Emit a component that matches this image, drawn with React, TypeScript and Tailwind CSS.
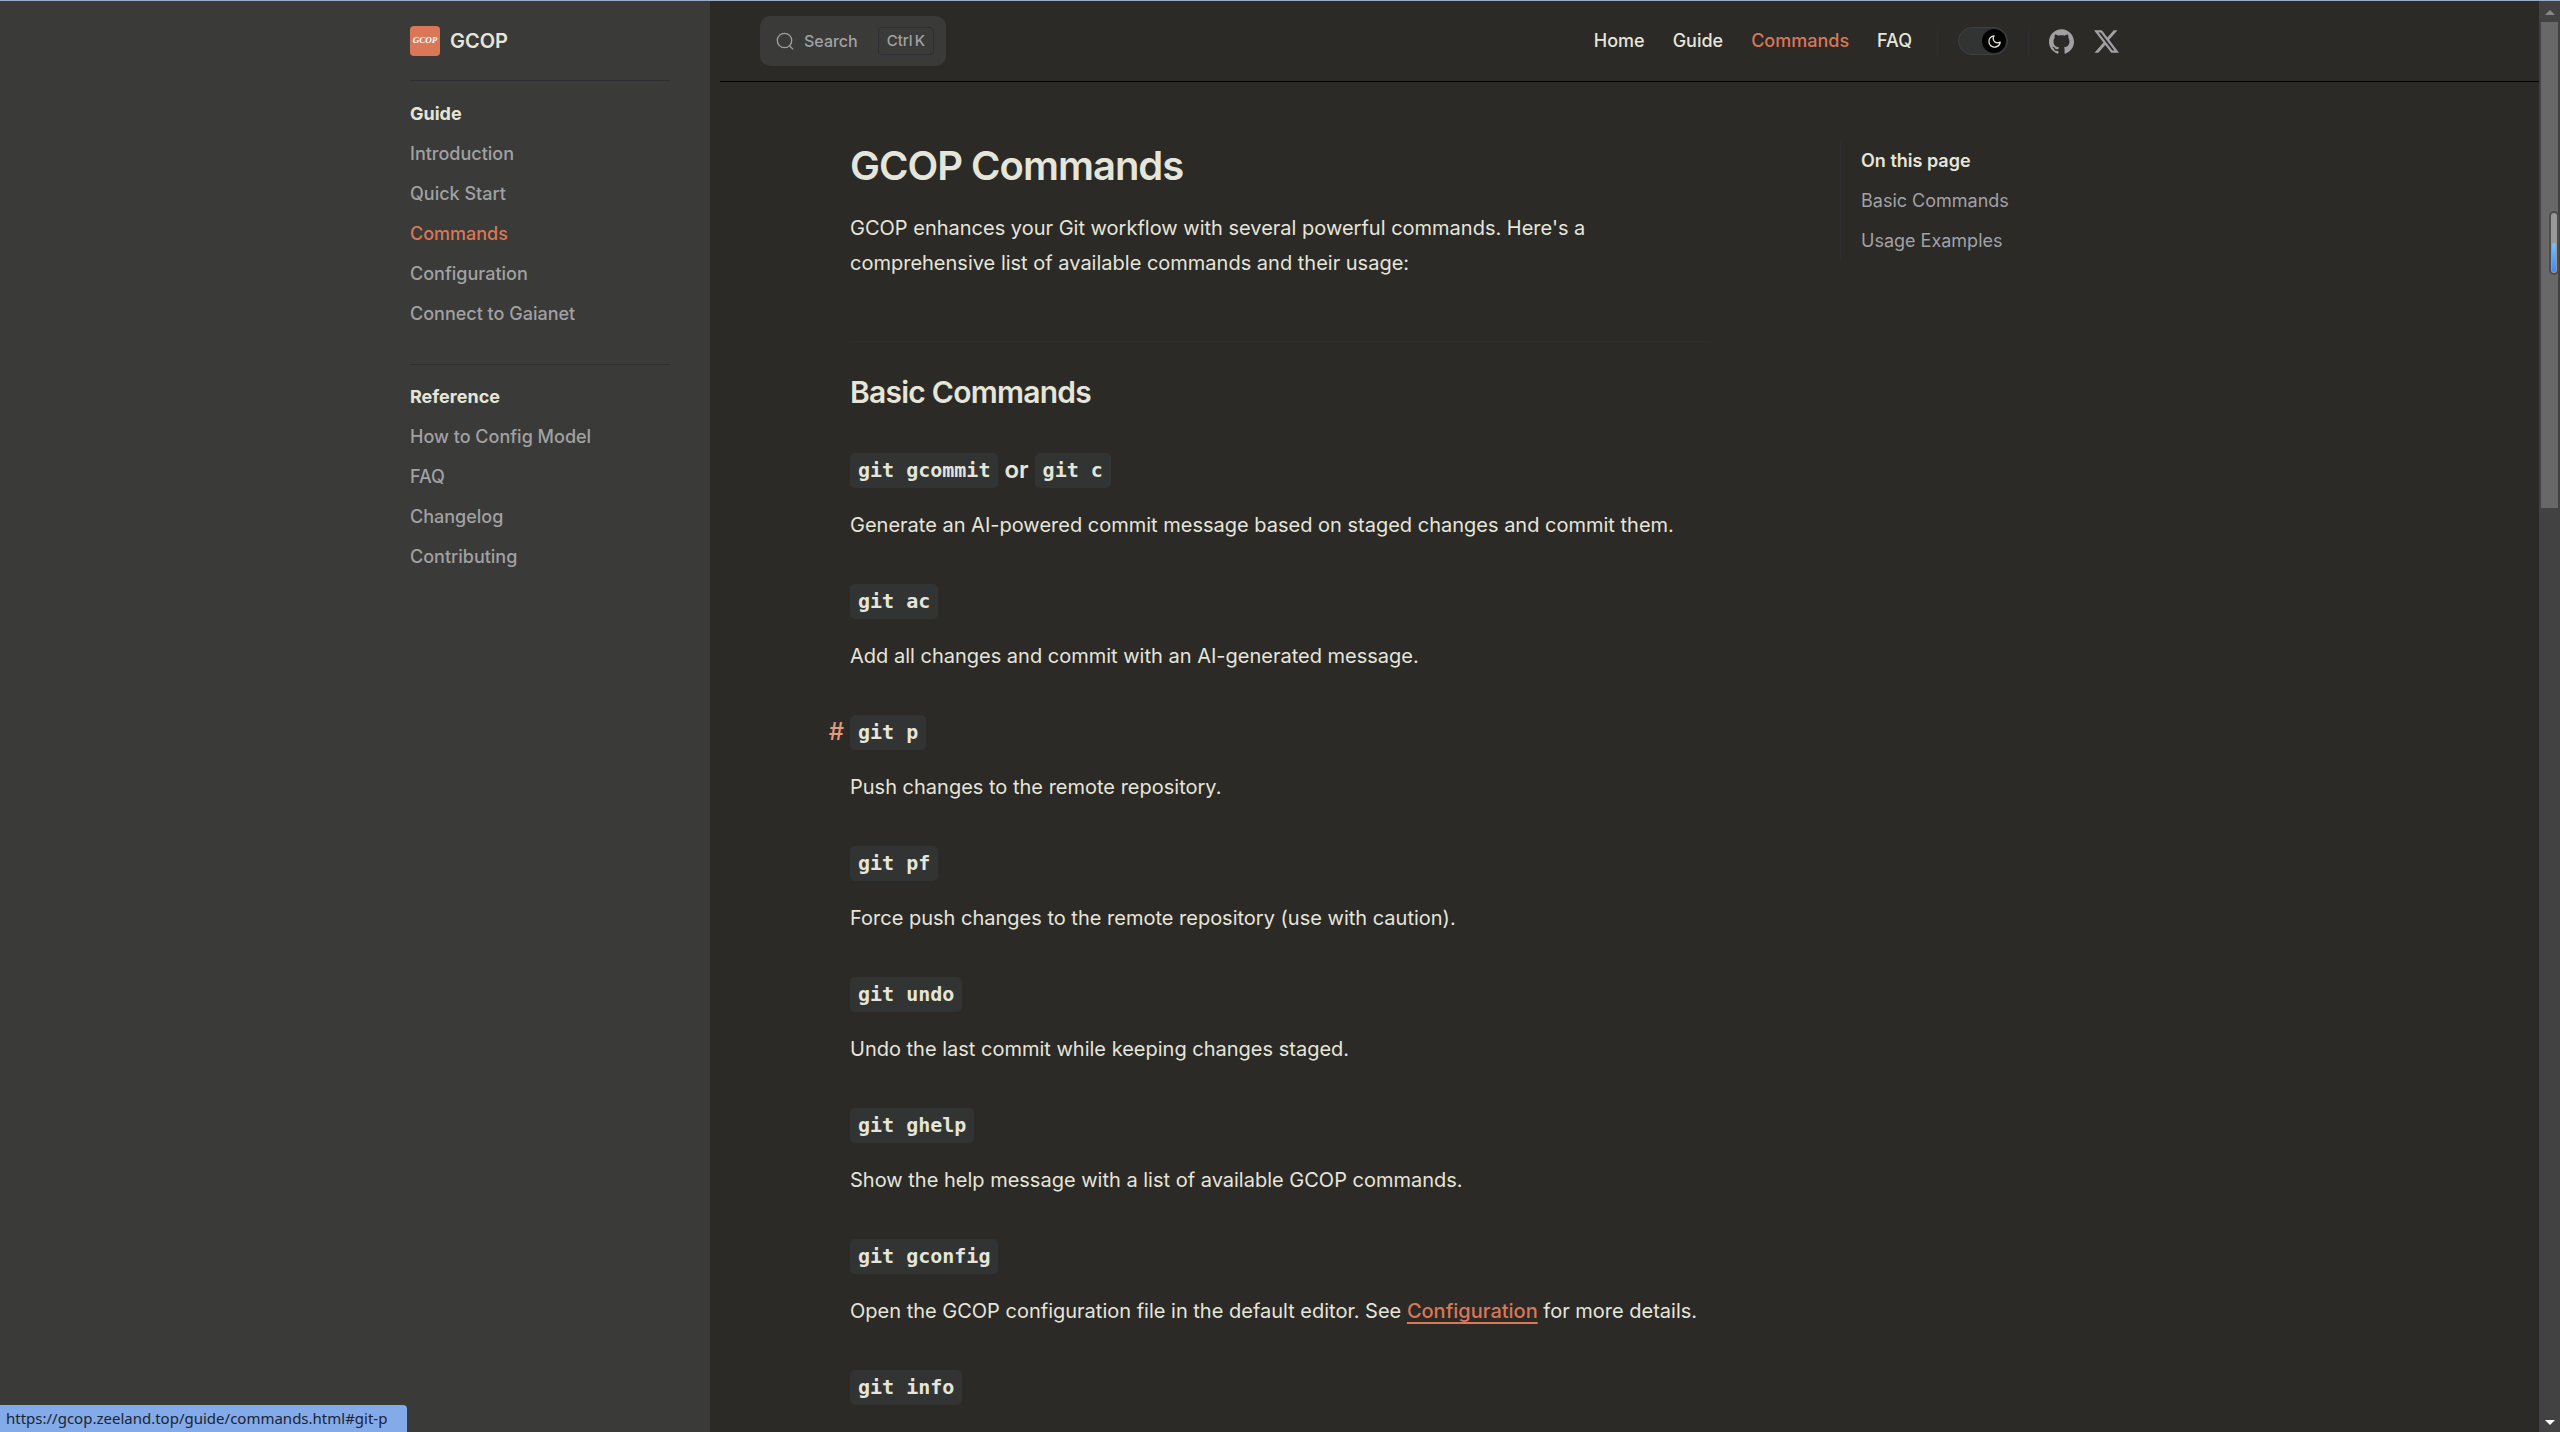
import { clsx } from "clsx";
import type { ReactNode } from "react";

interface LinkItem {
    text: string;
    active?: boolean;
}

interface SidebarGroup {
    title: string;
    items: LinkItem[];
}

interface Command {
    names: string[];
    description?: ReactNode;
    hovered?: boolean;
}

const navLinks: LinkItem[] = [
    { text: "Home" },
    { text: "Guide" },
    { text: "Commands", active: true },
    { text: "FAQ" },
];

const sidebarGroups: SidebarGroup[] = [
    {
        title: "Guide",
        items: [
            { text: "Introduction" },
            { text: "Quick Start" },
            { text: "Commands", active: true },
            { text: "Configuration" },
            { text: "Connect to Gaianet" },
        ],
    },
    {
        title: "Reference",
        items: [
            { text: "How to Config Model" },
            { text: "FAQ" },
            { text: "Changelog" },
            { text: "Contributing" },
        ],
    },
];

const commands: Command[] = [
    {
        names: ["git gcommit", "git c"],
        description:
            "Generate an AI-powered commit message based on staged changes and commit them.",
    },
    {
        names: ["git ac"],
        description: "Add all changes and commit with an AI-generated message.",
    },
    {
        names: ["git p"],
        description: "Push changes to the remote repository.",
        hovered: true,
    },
    {
        names: ["git pf"],
        description:
            "Force push changes to the remote repository (use with caution).",
    },
    {
        names: ["git undo"],
        description: "Undo the last commit while keeping changes staged.",
    },
    {
        names: ["git ghelp"],
        description:
            "Show the help message with a list of available GCOP commands.",
    },
    {
        names: ["git gconfig"],
        description: (
            <>
                Open the GCOP configuration file in the default editor. See{" "}
                <a
                    href="#configuration"
                    className="font-medium text-[#d97757] underline decoration-2 underline-offset-4"
                >
                    Configuration
                </a>{" "}
                for more details.
            </>
        ),
    },
    {
        names: ["git info"],
    },
];

export default function App() {
    return (
        <div className="relative flex h-screen overflow-hidden border-t border-[#9aabc6] bg-[#2b2a27] font-['Inter','Liberation_Sans',sans-serif] text-[#e5e5da]">
            <Sidebar />
            <div className="flex min-w-0 flex-1 flex-col">
                <NavBar />
                <div className="flex min-h-0 flex-1 gap-[130px] overflow-hidden pt-[59px] pl-[140px]">
                    <Doc />
                    <Outline />
                </div>
            </div>
            <PageScrollbar />
            <div className="absolute bottom-0 left-0 h-[27px] rounded-tr-sm bg-[#83aae9] pr-5 pl-1.5 font-['Noto_Sans',sans-serif] text-[15px] leading-[27px] text-[#1d2430]">
                https://gcop.zeeland.top/guide/commands.html#git-p
            </div>
        </div>
    );
}

function Sidebar() {
    return (
        <aside className="flex w-[28%] max-w-[710px] shrink-0 justify-end bg-[#3a3a38] pr-10">
            <div className="w-[260px]">
                <a
                    href="#home"
                    className="flex h-20 items-center gap-2.5 border-b border-[#2e2e32] text-xl font-semibold"
                >
                    <Logo />
                    GCOP
                </a>
                <nav>
                    {sidebarGroups.map((group, i) => (
                        <section
                            key={group.title}
                            className={clsx(
                                "pt-3 pb-[30px]",
                                i > 0 && "border-t border-[#2e2e32]",
                                i === 0 && "mt-px"
                            )}
                        >
                            <h2 className="text-lg leading-10 font-bold">
                                {group.title}
                            </h2>
                            {group.items.map((item) => (
                                <a
                                    key={item.text}
                                    href="#page"
                                    className={clsx(
                                        "block text-lg leading-10 font-medium",
                                        item.active
                                            ? "text-[#d97757]"
                                            : "text-[#a1a1a3]"
                                    )}
                                >
                                    {item.text}
                                </a>
                            ))}
                        </section>
                    ))}
                </nav>
            </div>
        </aside>
    );
}

function Logo() {
    return (
        <span className="flex size-[30px] items-center justify-center rounded-sm bg-[#d97757] font-['Liberation_Serif',serif] text-[9px] font-bold text-white italic">
            GCOP
        </span>
    );
}

function NavBar() {
    return (
        <header className="ml-2.5 flex h-[81px] shrink-0 items-center border-b border-black pr-[420px] pl-10">
            <button className="flex h-[50px] items-center rounded-[10px] bg-[#3a3a38] pr-3 pl-4 text-base font-medium text-[#a1a1a3]">
                <SearchIcon />
                <span className="ml-2.5">Search</span>
                <kbd className="ml-5 flex h-7 items-center gap-0.5 rounded border border-[#2e2e32] px-2 font-[inherit] text-[15px]">
                    <span>Ctrl</span>
                    <span>K</span>
                </kbd>
            </button>
            <nav className="ml-auto flex gap-7 text-lg font-medium">
                {navLinks.map((link) => (
                    <a
                        key={link.text}
                        href="#page"
                        className={clsx(link.active && "text-[#d97757]")}
                    >
                        {link.text}
                    </a>
                ))}
            </nav>
            <div className="ml-[25px] h-[30px] w-px bg-[#2e2e32]"></div>
            <button
                role="switch"
                aria-checked="true"
                aria-label="Dark mode"
                className="ml-5 flex h-7 w-[50px] items-center justify-end rounded-full border border-[#3c3f44] bg-[#323434] pr-px"
            >
                <span className="flex size-6 items-center justify-center rounded-full bg-black">
                    <MoonIcon />
                </span>
            </button>
            <div className="mx-5 h-[30px] w-px bg-[#2e2e32]"></div>
            <div className="flex gap-5 text-[#a1a1a3]">
                <a href="#github" aria-label="GitHub">
                    <GithubIcon />
                </a>
                <a href="#x" aria-label="X">
                    <XIcon />
                </a>
            </div>
        </header>
    );
}

function Doc() {
    return (
        <main className="w-[860px] shrink-0">
            <h1 className="text-[40px] leading-[50px] font-semibold tracking-tight">
                GCOP Commands
            </h1>
            <p className="mt-5 max-w-[760px] text-xl leading-[35px]">
                GCOP enhances your Git workflow with several powerful commands.
                Here's a comprehensive list of available commands and their
                usage:
            </p>
            <h2 className="mt-[60px] border-t border-[#2e2e32] pt-[30px] text-[30px] leading-10 font-semibold tracking-tight">
                Basic Commands
            </h2>
            {commands.map((command) => (
                <CommandEntry key={command.names[0]} command={command} />
            ))}
        </main>
    );
}

function CommandEntry({ command }: { command: Command }) {
    return (
        <section className="mt-10">
            <h3 className="relative flex h-9 items-end gap-1.5 text-2xl leading-9 font-semibold">
                {command.hovered && (
                    <a
                        href="#git-p"
                        className="absolute right-full mr-1.5 font-medium text-[#e59a80]"
                    >
                        #
                    </a>
                )}
                {command.names.map((name, i) => (
                    <CommandName key={name} name={name} joined={i > 0} />
                ))}
            </h3>
            {command.description && (
                <p className="mt-5 text-xl leading-[35px]">
                    {command.description}
                </p>
            )}
        </section>
    );
}

function CommandName({ name, joined }: { name: string; joined: boolean }) {
    return (
        <>
            {joined && <span>or</span>}
            <code className="rounded-[5px] bg-[#323434] px-2 font-['DejaVu_Sans_Mono',monospace] text-xl leading-[35px] font-bold">
                {name}
            </code>
        </>
    );
}

function Outline() {
    return (
        <aside className="h-[120px] w-[280px] border-l border-[#2e2e32] pl-5 text-lg leading-10">
            <h2 className="font-semibold">On this page</h2>
            <a href="#basic-commands" className="block text-[#a1a1a3]">
                Basic Commands
            </a>
            <a href="#usage-examples" className="block text-[#a1a1a3]">
                Usage Examples
            </a>
        </aside>
    );
}

function PageScrollbar() {
    return (
        <div className="relative flex w-[21px] shrink-0 flex-col items-center bg-[#424242] pt-[9px] pb-[7px]">
            <svg width="10" height="5" viewBox="0 0 10 5" fill="#868686">
                <path d="M5 0 10 5H0z" />
            </svg>
            <div className="mt-[7px] h-[486px] w-[17px] bg-[#686868]"></div>
            <svg
                className="mt-auto"
                width="10"
                height="5"
                viewBox="0 0 10 5"
                fill="#ffffff"
            >
                <path d="M0 0h10L5 5z" />
            </svg>
            {/* floating level indicator docked at the screen edge */}
            <div className="absolute top-[210px] right-px flex h-16 w-2.5 items-end justify-center rounded-[5px] border-2 border-[#4d4d4d] bg-[#999999] pb-px">
                <div className="h-[29px] w-1 rounded-sm bg-linear-to-b from-[#6fc3ff] to-[#3f87ff]"></div>
            </div>
        </div>
    );
}

function SearchIcon() {
    return (
        <svg
            width="18"
            height="18"
            viewBox="0 0 18 18"
            fill="none"
            stroke="currentColor"
            strokeWidth="1.3"
        >
            <circle cx="8.5" cy="8.5" r="7.2" />
            <path d="m13.5 13.8 3.6 3.6" />
        </svg>
    );
}

function MoonIcon() {
    return (
        <svg
            width="15"
            height="15"
            viewBox="0 0 24 24"
            fill="#e5e5da"
        >
            <path d="M12.1 22h-.9c-5.5-.5-9.5-5.4-9-10.9.4-4.8 4.2-8.6 9-9 .4 0 .8.2 1 .5.2.3.2.8-.1 1.1-2 2.7-1.4 6.4 1.3 8.4 2.1 1.6 5 1.6 7.1 0 .3-.2.7-.3 1.1-.1.3.2.5.6.5 1-.2 2.7-1.5 5.1-3.6 6.8-1.9 1.4-4.1 2.2-6.4 2.2zM9.3 4.4c-2.9 1-5 3.6-5.2 6.8-.4 4.4 2.8 8.3 7.2 8.7 2.1.2 4.2-.4 5.8-1.8 1.1-.9 1.9-2.1 2.4-3.4-2.5.9-5.3.5-7.5-1.1-2.8-2.2-3.8-6-2.7-9.2z" />
        </svg>
    );
}

function GithubIcon() {
    return (
        <svg width="25" height="25" viewBox="0 0 24 24" fill="currentColor">
            <path d="M12 .297c-6.63 0-12 5.373-12 12 0 5.303 3.438 9.8 8.205 11.385.6.113.82-.258.82-.577 0-.285-.01-1.04-.015-2.04-3.338.724-4.042-1.61-4.042-1.61C4.422 18.07 3.633 17.7 3.633 17.7c-1.087-.744.084-.729.084-.729 1.205.084 1.838 1.236 1.838 1.236 1.07 1.835 2.809 1.305 3.495.998.108-.776.417-1.305.76-1.605-2.665-.3-5.466-1.332-5.466-5.93 0-1.31.465-2.38 1.235-3.22-.135-.303-.54-1.523.105-3.176 0 0 1.005-.322 3.3 1.23.96-.267 1.98-.399 3-.405 1.02.006 2.04.138 3 .405 2.28-1.552 3.285-1.23 3.285-1.23.645 1.653.24 2.873.12 3.176.765.84 1.23 1.91 1.23 3.22 0 4.61-2.805 5.625-5.475 5.92.42.36.81 1.096.81 2.22 0 1.606-.015 2.896-.015 3.286 0 .315.21.69.825.57C20.565 22.092 24 17.592 24 12.297c0-6.627-5.373-12-12-12" />
        </svg>
    );
}

function XIcon() {
    return (
        <svg width="25" height="25" viewBox="0 0 24 24" fill="currentColor">
            <path d="M18.901 1.153h3.68l-8.04 9.19L24 22.846h-7.406l-5.8-7.584-6.638 7.584H.474l8.6-9.83L0 1.154h7.594l5.243 6.932ZM17.61 20.644h2.039L6.486 3.24H4.298Z" />
        </svg>
    );
}
